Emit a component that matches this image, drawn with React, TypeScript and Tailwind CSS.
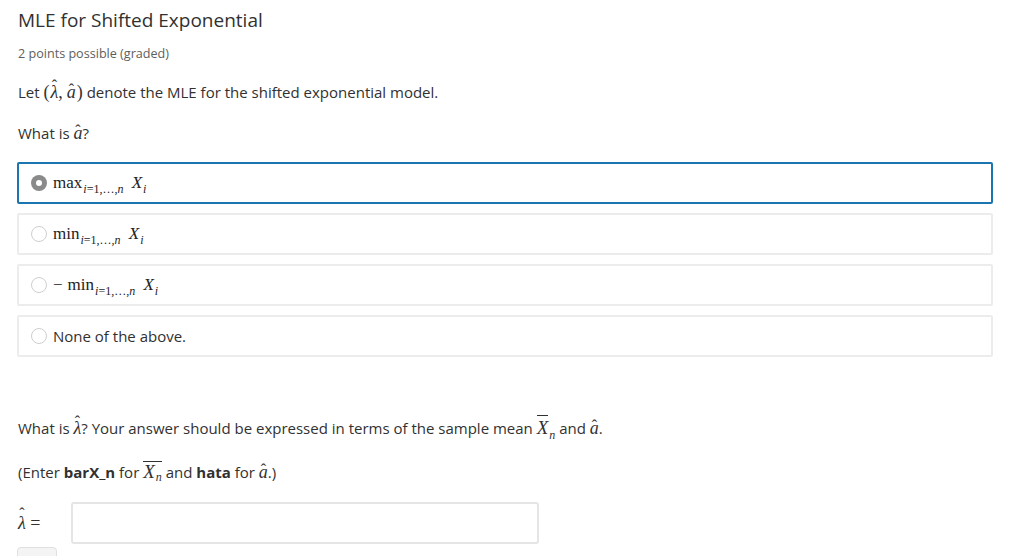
import React from "react";

const serif = "font-['Liberation_Serif','DejaVu_Serif',serif]";

function Hat({ ch, big = false }: { ch: string; big?: boolean }) {
  return (
    <span className={`relative inline-block ${serif} italic`}>
      {ch}
      <span
        className={`absolute left-1/2 -translate-x-1/2 not-italic ${big ? "-top-[4px]" : "top-[0px]"} text-[16px] leading-none`}
      >
        ˆ
      </span>
    </span>
  );
}

function Sub({ children }: { children: React.ReactNode }) {
  return <span className="relative top-[5px] text-[12px] ml-[1px]">{children}</span>;
}

function Range() {
  return (
    <Sub>
      <span className="italic">i</span>=1,…,<span className="italic">n</span>
    </Sub>
  );
}

function Radio({ checked }: { checked?: boolean }) {
  if (checked) {
    return (
      <span className="w-[16px] h-[16px] rounded-full bg-[#8a8a8a] flex items-center justify-center shrink-0">
        <span className="w-[6px] h-[6px] rounded-full bg-white" />
      </span>
    );
  }
  return <span className="w-[16px] h-[16px] rounded-full border border-[#cfcfcf] bg-white shrink-0" />;
}

function Option({ checked, children }: { checked?: boolean; children: React.ReactNode }) {
  return (
    <div
      className={`h-[42px] rounded-[2px] flex items-center gap-[6px] pl-[12px] ${
        checked ? "border-2 border-[#1b75b0]" : "border-2 border-[#ececec]"
      }`}
    >
      <Radio checked={checked} />
      {children}
    </div>
  );
}

export default function App() {
  return (
    <div className="bg-white w-[1024px] h-[556px] overflow-hidden font-['Open_Sans',sans-serif] text-[#313131]">
      <div className="pl-[17px] pr-[31px]">
        <h1 className="pt-[8px] text-[19px] leading-[24px] pl-[1px] text-[#313131]">MLE for Shifted Exponential</h1>
        <div className="mt-[14px] text-[12.6px] leading-[16px] pl-[1px] text-[#5e5e5e]">2 points possible (graded)</div>
        <p className="mt-[19px] text-[15px] leading-[20px] pl-[1px]">
          Let <span className={`${serif} text-[18px]`}>(</span>
          <span className="text-[18px] ml-[1px]"><Hat ch="λ" big /></span>
          <span className={`${serif} text-[18px] mr-[4px]`}>,</span>
          <span className="text-[18px]"><Hat ch="a" /></span>
          <span className={`${serif} text-[18px] ml-[1px]`}>)</span> denote the MLE for the shifted exponential model.
        </p>
        <p className="mt-[20px] text-[15px] leading-[20px] pl-[1px]">
          What is <span className="text-[18px]"><Hat ch="a" /></span>?
        </p>

        <div className="mt-[19px] flex flex-col gap-[9px]">
          <Option checked>
            <span className={`${serif} text-[17px] text-[#222]`}>
              max<Range /> <span className="italic ml-[4px]">X</span>
              <Sub><span className="italic">i</span></Sub>
            </span>
          </Option>
          <Option>
            <span className={`${serif} text-[17px] text-[#222]`}>
              min<Range /> <span className="italic ml-[4px]">X</span>
              <Sub><span className="italic">i</span></Sub>
            </span>
          </Option>
          <Option>
            <span className={`${serif} text-[17px] text-[#222]`}>
              −<span className="ml-[5px]">min</span><Range /> <span className="italic ml-[4px]">X</span>
              <Sub><span className="italic">i</span></Sub>
            </span>
          </Option>
          <Option>
            <span className="text-[15px]">None of the above.</span>
          </Option>
        </div>

        <p className="mt-[60px] text-[15px] leading-[20px] pl-[1px]">
          What is <span className="text-[18px]"><Hat ch="λ" big /></span>? Your answer should be expressed in terms of the sample mean{" "}
          <span className={`${serif} text-[19px]`}>
            <span className="italic border-t border-[#313131] pt-[1px]">X</span>
            <Sub><span className="italic">n</span></Sub>
          </span>{" "}
          and <span className="text-[18px]"><Hat ch="a" /></span>.
        </p>
        <p className="mt-[21px] text-[15px] leading-[20px] pl-[1px]">
          (Enter <b className="font-bold">barX_n</b> for{" "}
          <span className={`${serif} text-[19px]`}>
            <span className="italic border-t border-[#313131] pt-[1px] inline-block leading-[17px]">
              X<span className="text-[12px] relative top-[3px] ml-[1px]">n</span>
            </span>
          </span>{" "}
          and <b className="font-bold">hata</b> for <span className="text-[18px]"><Hat ch="a" /></span>.)
        </p>

        <div className="mt-[19px] flex items-center">
          <span className={`${serif} text-[18px] w-[54px] pl-[1px]`}>
            <Hat ch="λ" big /> <span className="not-italic">=</span>
          </span>
          <div className="w-[468px] h-[42px] border-2 border-[#e5e5e5] rounded-[3px] bg-white" />
        </div>
        <div className="mt-[3px] w-[40px] h-[20px] rounded-t-[4px] border border-[#e0e0e0] bg-[#f4f4f4]" />
      </div>
    </div>
  );
}
